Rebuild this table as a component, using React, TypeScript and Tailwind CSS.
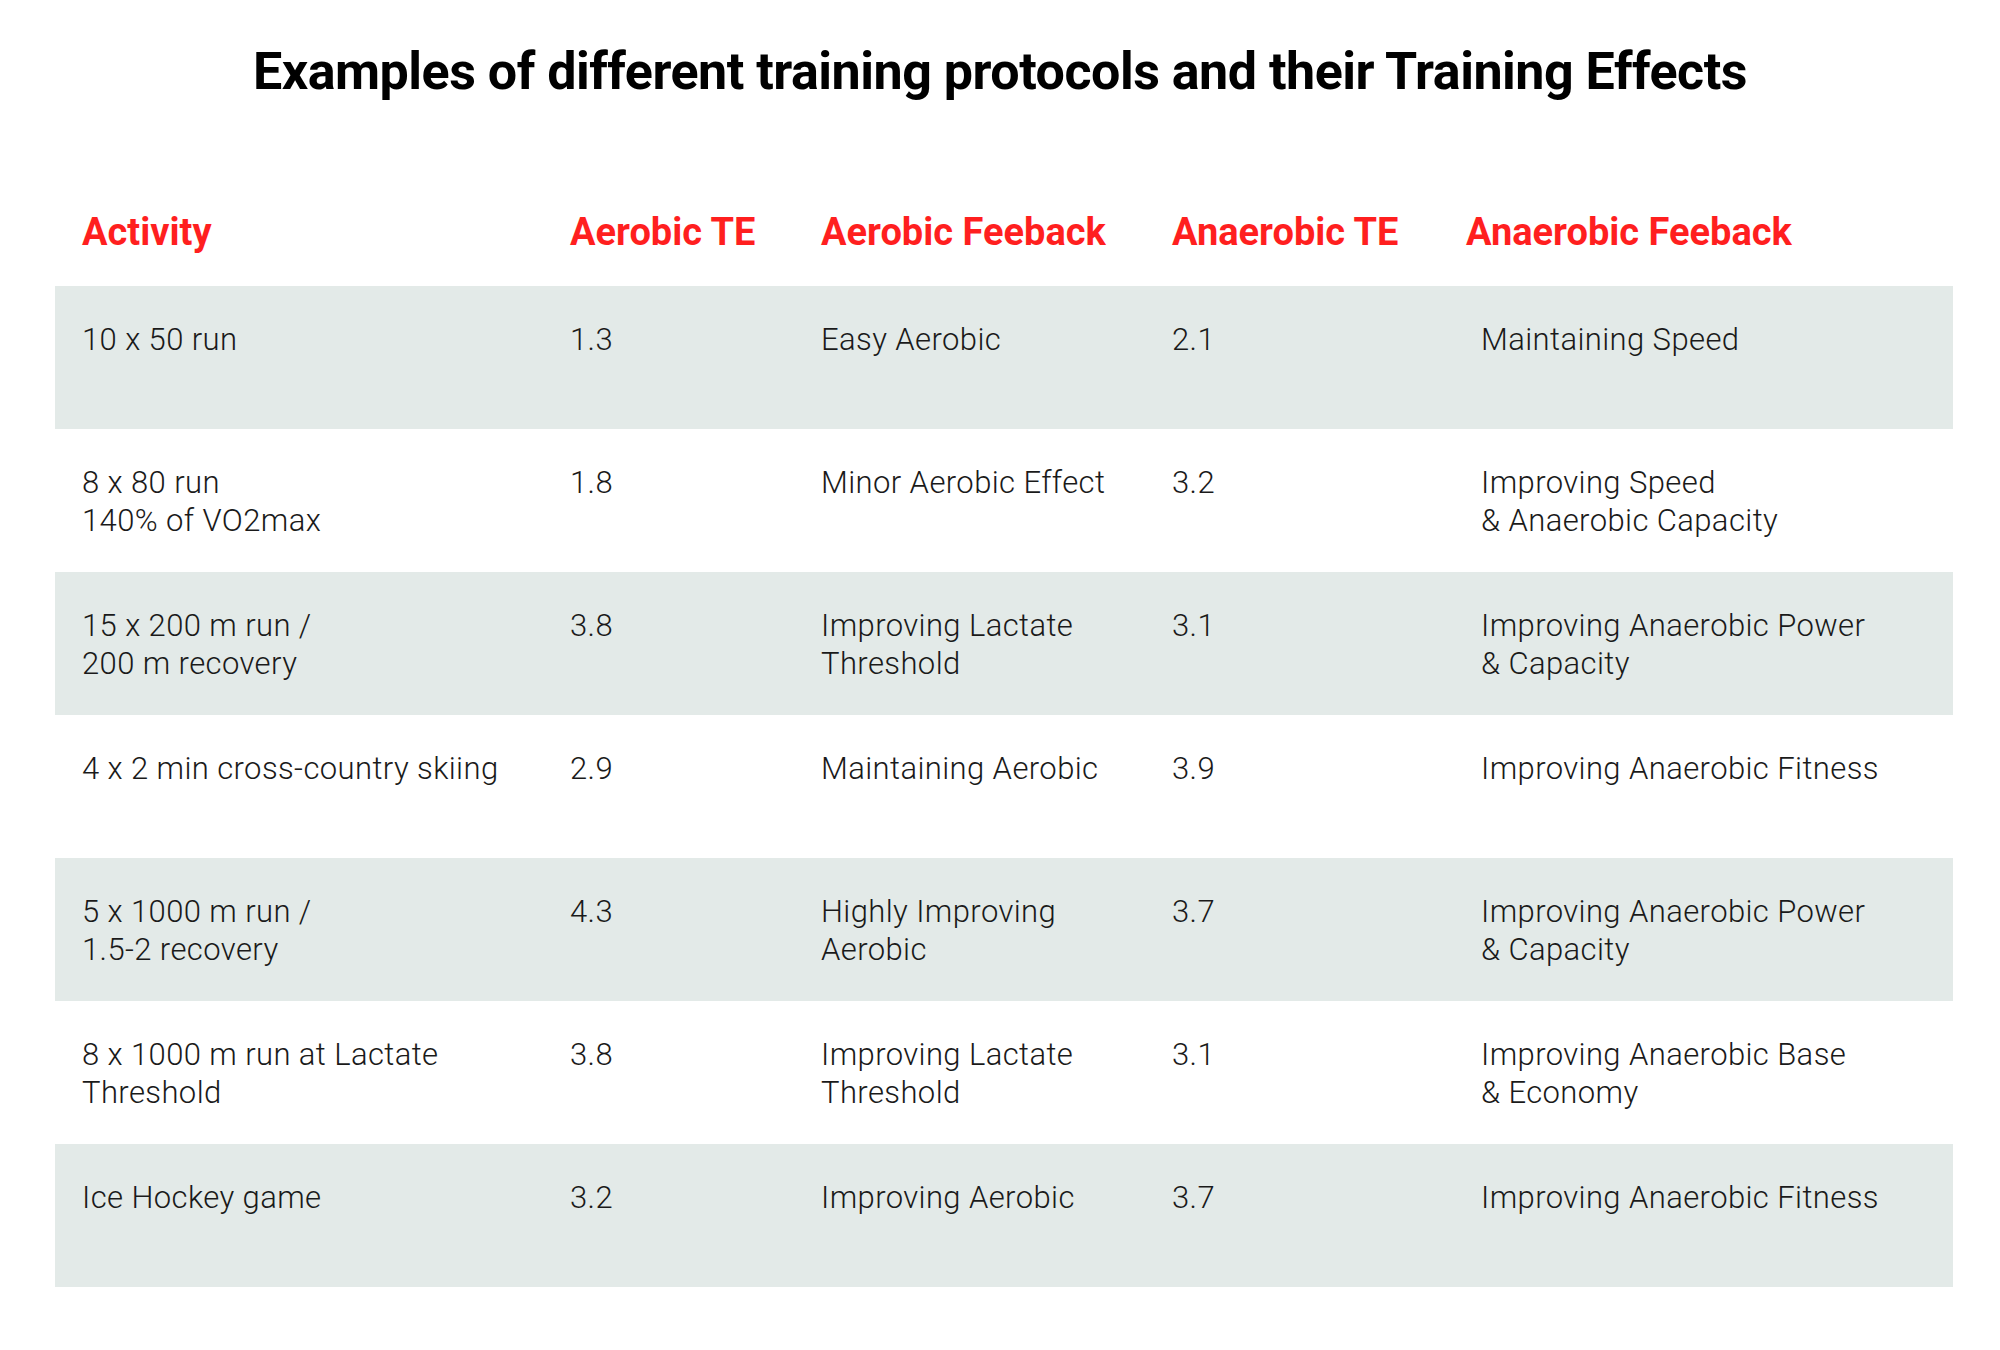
import React from "react";

const rows: [string[], string, string[], string, string[]][] = [
  [["10 x 50 run"], "1.3", ["Easy Aerobic"], "2.1", ["Maintaining Speed"]],
  [["8 x 80 run", "140% of VO2max"], "1.8", ["Minor Aerobic Effect"], "3.2", ["Improving Speed", "& Anaerobic Capacity"]],
  [["15 x 200 m run /", "200 m recovery"], "3.8", ["Improving Lactate", "Threshold"], "3.1", ["Improving Anaerobic Power", "& Capacity"]],
  [["4 x 2 min cross-country skiing"], "2.9", ["Maintaining Aerobic"], "3.9", ["Improving Anaerobic Fitness"]],
  [["5 x 1000 m run /", "1.5-2 recovery"], "4.3", ["Highly Improving", "Aerobic"], "3.7", ["Improving Anaerobic Power", "& Capacity"]],
  [["8 x 1000 m run at Lactate", "Threshold"], "3.8", ["Improving Lactate", "Threshold"], "3.1", ["Improving Anaerobic Base", "& Economy"]],
  [["Ice Hockey game"], "3.2", ["Improving Aerobic"], "3.7", ["Improving Anaerobic Fitness"]],
];

function Lines({ lines }: { lines: string[] }) {
  return (
    <div>
      {lines.map((l, i) => (
        <div key={i}>{l}</div>
      ))}
    </div>
  );
}

export default function App() {
  return (
    <div className="w-[2000px] h-[1350px] bg-white font-['Roboto','Liberation_Sans',sans-serif]">
      <h1 className="pt-[46px] text-center text-[52px] leading-[52px] font-bold text-black tracking-[-0.5px]">
        Examples of different training protocols and their Training Effects
      </h1>
      <div className="mt-[115px] ml-[55px] w-[1898px]">
        <div className="grid grid-cols-[488px_251px_351px_309px_1fr] pl-[27px] text-[38px] leading-[38px] font-bold text-[#ff1f1f]">
          <div>Activity</div>
          <div>Aerobic TE</div>
          <div>Aerobic Feeback</div>
          <div>Anaerobic TE</div>
          <div className="-ml-[15px]">Anaerobic Feeback</div>
        </div>
        <div className="mt-[35px]">
          {rows.map((r, i) => (
            <div
              key={i}
              className={`grid grid-cols-[488px_251px_351px_309px_1fr] pl-[27px] pt-[35px] h-[143px] text-[31px] leading-[38px] font-light tracking-[0.4px] text-[#1a1a1a] ${
                i % 2 === 0 ? "bg-[#e3eae8]" : "bg-white"
              }`}
            >
              <Lines lines={r[0]} />
              <div>{r[1]}</div>
              <Lines lines={r[2]} />
              <div>{r[3]}</div>
              <Lines lines={r[4]} />
            </div>
          ))}
        </div>
      </div>
    </div>
  );
}
